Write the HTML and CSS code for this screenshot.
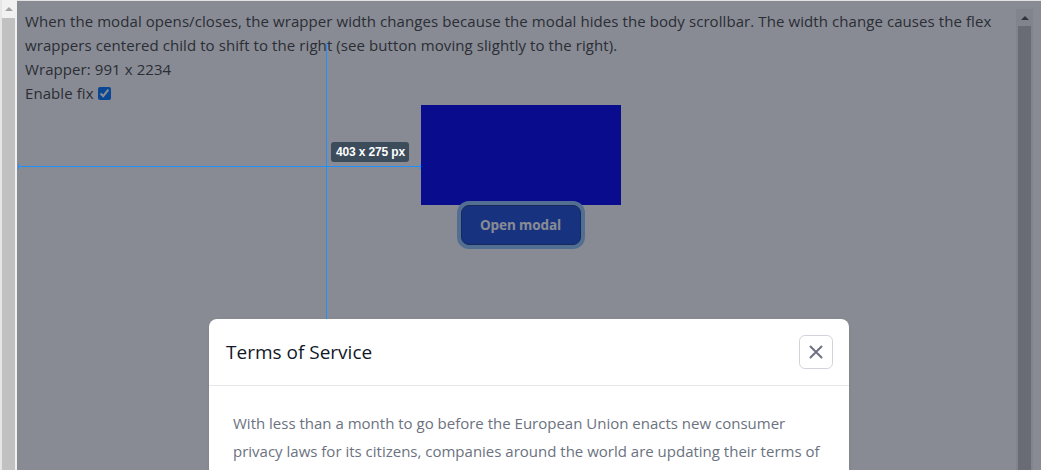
FILE: index.html
```html
<!DOCTYPE html>
<html lang="en">
<head>
<meta charset="utf-8">
<title>Modal scrollbar shift</title>
<link rel="stylesheet" href="styles.css">
</head>
<body>
<div class="screen">
  <div class="outer-scroll">
    <div class="scroll-arrow"><span class="tri"></span></div>
    <div class="outer-thumb"></div>
  </div>
  <div class="viewport">
    <div class="page">
      <div class="wrapper">
        <p class="note">When the modal opens/closes, the wrapper width changes because the modal hides the body scrollbar. The width change causes the flex wrappers centered child to shift to the right (see button moving slightly to the right).</p>
        <p class="line">Wrapper: 991 x 2234</p>
        <label class="line">Enable fix <input class="fix" type="checkbox" checked></label>
        <div class="center">
          <div class="stack">
            <div class="box"></div>
            <button class="btn" type="button">Open modal</button>
          </div>
        </div>
      </div>
      <div class="inner-scroll">
        <div class="scroll-arrow inner"><span class="tri dark"></span></div>
        <div class="inner-thumb"></div>
      </div>
    </div>
    <div class="backdrop"></div>
    <div class="guide-v"></div>
    <div class="guide-h"></div>
    <div class="tooltip">403 x 275 px</div>
    <div class="modal-layer">
      <div class="modal">
        <div class="modal-header">
          <h3 class="modal-title">Terms of Service</h3>
          <button class="close" type="button" aria-label="Close">
            <svg width="14" height="14" viewBox="0 0 14 14"><path d="M1.5 1.5 L12.5 12.5 M12.5 1.5 L1.5 12.5" stroke="#6b7280" stroke-width="2" stroke-linecap="round" fill="none"/></svg>
          </button>
        </div>
        <div class="modal-body">
          <p>With less than a month to go before the European Union enacts new consumer<br>privacy laws for its citizens, companies around the world are updating their terms of<br>service agreements to comply.</p>
        </div>
      </div>
    </div>
  </div>
</div>
</body>
</html>
```
FILE: styles.css
```css
html, body {
  margin: 0;
  height: 100%;
  overflow: hidden;
}

body {
  font-family: "Open Sans", "Noto Sans", sans-serif;
  background: #ffffff;
}

.screen {
  display: flex;
  height: 470px;
}

/* outer browser scrollbar */
.outer-scroll {
  width: 17px;
  box-sizing: border-box;
  background: #f1f1f1;
  border-left: 2px solid #e6e6e6;
  border-right: 2px solid #f0f0f0;
  display: flex;
  flex-direction: column;
}

.scroll-arrow {
  height: 18px;
  display: flex;
  justify-content: center;
  align-items: center;
}

.tri {
  width: 0;
  height: 0;
  border-left: 4px solid transparent;
  border-right: 4px solid transparent;
  border-bottom: 4px solid #a3a3a3;
}

.tri.dark {
  border-bottom-color: #505050;
}

.outer-thumb {
  flex: 1;
  background: #c1c1c1;
}

/* page inside the frame */
.viewport {
  flex: 1;
  position: relative;
  overflow: hidden;
  border-top: 1px solid #e2e2e2;
  background: #ffffff;
}

.page {
  display: flex;
  height: 100%;
  box-sizing: border-box;
  padding: 8px 8px 0 8px;
  color: #444444;
  font-size: 15px;
  line-height: 24px;
  letter-spacing: 0.08px;
}

.wrapper {
  flex: 1;
}

.note,
.line {
  margin: 0;
  display: block;
}

.fix {
  width: 13px;
  height: 13px;
  margin: 0;
  vertical-align: -1px;
}

.center {
  display: flex;
  justify-content: center;
}

.stack {
  display: flex;
  flex-direction: column;
  align-items: center;
}

.box {
  width: 200px;
  height: 100px;
  background: #0000f0;
}

.btn {
  width: 120px;
  height: 40px;
  box-sizing: border-box;
  border: 1px solid #1e3a8a;
  border-radius: 8px;
  background: #1d4ed8;
  color: #ffffff;
  font-family: "Open Sans", "Noto Sans", sans-serif;
  font-size: 13.5px;
  font-weight: 700;
  letter-spacing: -0.1px;
  box-shadow: 0 0 0 4px #93c5fd;
  padding: 0;
}

.inner-scroll {
  width: 17px;
  background: #f1f1f1;
  display: flex;
  flex-direction: column;
  align-items: center;
}

.scroll-arrow.inner {
  height: 17px;
  width: 100%;
}

.inner-thumb {
  flex: 1;
  width: 13px;
  background: #c1c1c1;
}

/* modal backdrop */
.backdrop {
  position: absolute;
  inset: 0;
  background: rgba(17, 24, 39, 0.5);
}

/* devtools measuring guides */
.guide-v {
  position: absolute;
  left: 309px;
  top: 42px;
  width: 1px;
  height: 277px;
  background: #1e90ff;
}

.guide-h {
  position: absolute;
  left: 1px;
  top: 165px;
  width: 403px;
  height: 1px;
  background: #1e90ff;
}

.guide-h::before,
.guide-h::after {
  content: "";
  position: absolute;
  top: -2px;
  width: 1px;
  height: 5px;
  background: #1e90ff;
}

.guide-h::before { left: 0; }
.guide-h::after { right: 0; }

.tooltip {
  position: absolute;
  left: 314px;
  top: 141px;
  padding: 3px 4px 3px 5px;
  border-radius: 3px;
  background: #3c4c5b;
  color: #ffffff;
  font-family: "Liberation Sans", Arial, sans-serif;
  font-size: 12px;
  font-weight: 700;
  line-height: 14px;
  letter-spacing: -0.15px;
}

/* modal */
.modal-layer {
  position: absolute;
  inset: 0;
  display: flex;
  justify-content: center;
  align-items: flex-start;
  padding-top: 318px;
}

.modal {
  width: 640px;
  background: #ffffff;
  border-radius: 8px;
  box-shadow: 0 1px 3px rgba(0, 0, 0, 0.1);
}

.modal-header {
  display: flex;
  justify-content: space-between;
  align-items: center;
  padding: 16px 16px 16px 17px;
  border-bottom: 1px solid #e5e7eb;
}

.modal-title {
  margin: 0;
  font-size: 19px;
  font-weight: 500;
  line-height: 28px;
  color: #111827;
}

.close {
  width: 34px;
  height: 34px;
  padding: 0;
  display: flex;
  justify-content: center;
  align-items: center;
  background: transparent;
  border: 1px solid #d1d5db;
  border-radius: 6px;
}

.modal-body {
  padding: 23px 24px;
  color: #6b7280;
  font-size: 15px;
  line-height: 28px;
}

.modal-body p {
  margin: 0;
  white-space: nowrap;
}
```
